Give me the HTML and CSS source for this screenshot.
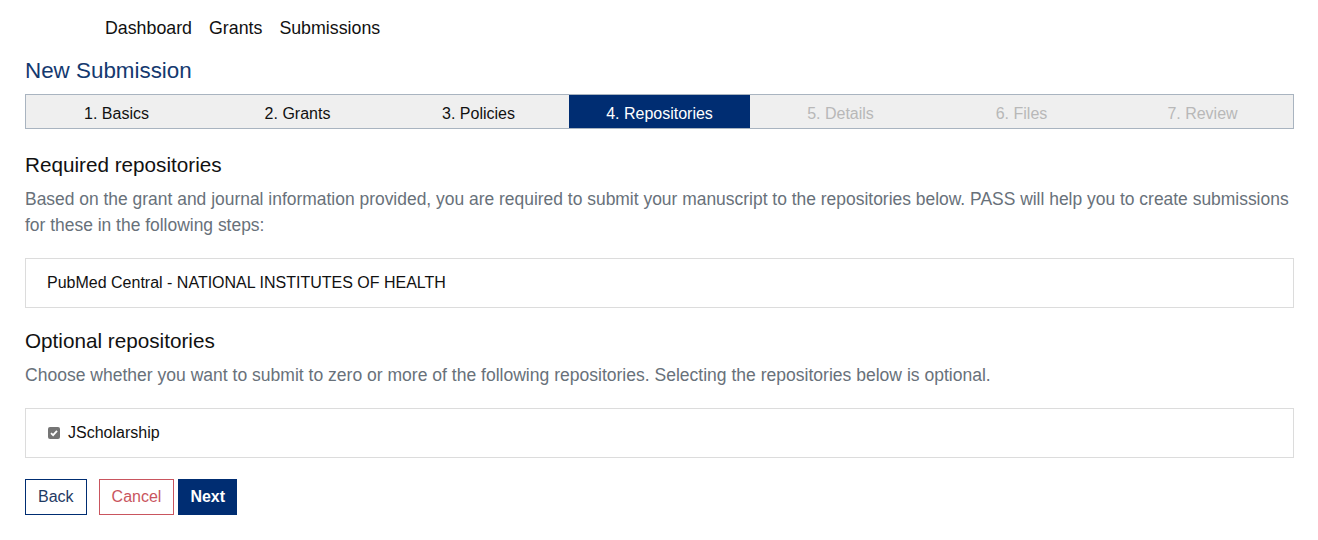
FILE: index.html
```html
<!DOCTYPE html>
<html>
<head>
<meta charset="utf-8">
<link rel="stylesheet" href="styles.css">
</head>
<body>
<nav class="topnav">
  <a>Dashboard</a>
  <a>Grants</a>
  <a>Submissions</a>
</nav>
<main class="page">
  <h1 class="title">New Submission</h1>
  <div class="steps">
    <div class="step">1. Basics</div>
    <div class="step">2. Grants</div>
    <div class="step">3. Policies</div>
    <div class="step active">4. Repositories</div>
    <div class="step disabled">5. Details</div>
    <div class="step disabled">6. Files</div>
    <div class="step disabled">7. Review</div>
  </div>
  <h2 class="heading">Required repositories</h2>
  <p class="lead wide">Based on the grant and journal information provided, you are required to submit your manuscript to the repositories below. PASS will help you to create submissions for these in the following steps:</p>
  <div class="box">PubMed Central - NATIONAL INSTITUTES OF HEALTH</div>
  <h2 class="heading second">Optional repositories</h2>
  <p class="lead">Choose whether you want to submit to zero or more of the following repositories. Selecting the repositories below is optional.</p>
  <div class="box opt">
    <span class="check"><svg width="10" height="10" viewBox="0 0 10 10"><path d="M2 5.2 L4.1 7.2 L8 2.8" fill="none" stroke="#fff" stroke-width="1.8"/></svg></span>
    <span>JScholarship</span>
  </div>
  <div class="actions">
    <button class="btn back">Back</button>
    <button class="btn cancel">Cancel</button>
    <button class="btn next">Next</button>
  </div>
</main>
</body>
</html>
```
FILE: styles.css
```css
* { box-sizing: border-box; }
body {
  margin: 0;
  font-family: "Liberation Sans", Arial, sans-serif;
  color: #212529;
  background: #fff;
}
.topnav {
  display: flex;
  gap: 17px;
  padding: 18px 0 0 105px;
  font-size: 17.8px;
  line-height: 20px;
  color: #111;
}
.page {
  padding: 0 24px 0 25px;
}
.title {
  margin: 20px 0 0;
  font-size: 22.4px;
  font-weight: normal;
  color: #14396f;
  line-height: 26px;
}
.steps {
  margin-top: 10px;
  display: grid;
  grid-template-columns: repeat(7, 1fr);
  border: 1px solid #a9b4c0;
  background: #efefef;
  height: 35px;
}
.step {
  display: flex;
  align-items: center;
  justify-content: center;
  font-size: 16px;
  padding-top: 4px;
  color: #111;
}
.step.active {
  background: #002d72;
  color: #fff;
}
.step.disabled {
  color: #b8b8b8;
}
.heading {
  margin: 24px 0 0;
  font-size: 20.7px;
  font-weight: normal;
  line-height: 24px;
  color: #111;
}
.heading.second {
  margin-top: 21px;
}
.lead {
  margin: 9px 0 0;
  font-size: 17.55px;
  line-height: 26px;
  color: #68717a;
}
.lead.wide {
  font-size: 17.45px;
  margin-right: -8px;
}
.box {
  margin-top: 20px;
  border: 1px solid #dcdcdc;
  height: 50px;
  display: flex;
  align-items: center;
  padding-left: 21px;
  font-size: 16px;
  color: #111;
}
.box.opt {
  margin-top: 20px;
  gap: 8px;
  padding-left: 22px;
}
.check {
  width: 12px;
  height: 12px;
  background: #757575;
  border-radius: 2px;
  display: flex;
  align-items: center;
  justify-content: center;
}
.actions {
  margin-top: 21px;
  display: flex;
}
.btn {
  font-family: "Liberation Sans", Arial, sans-serif;
  font-size: 16px;
  height: 36px;
  padding: 0 12px;
  background: #fff;
  cursor: pointer;
}
.back {
  border: 1px solid #002d72;
  color: #1f3a63;
}
.cancel {
  margin-left: 12px;
  border: 1px solid #c9555e;
  color: #c9555e;
}
.next {
  margin-left: 4px;
  border: 1px solid #002d72;
  background: #002d72;
  color: #fff;
  font-weight: bold;
  padding: 0 11px;
}
```
